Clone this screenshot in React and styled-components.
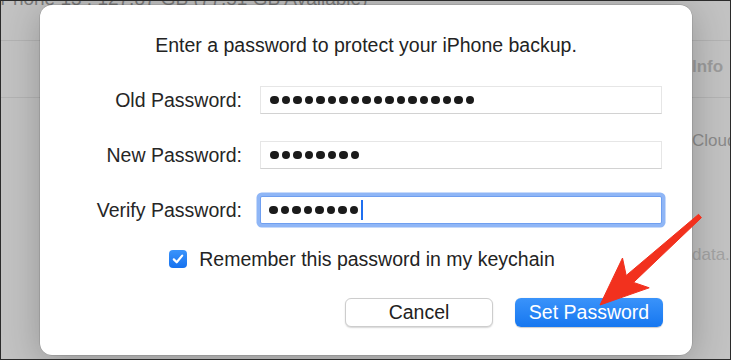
import React from 'react';
import styled, { createGlobalStyle } from 'styled-components';

const GlobalStyle = createGlobalStyle`
  html, body {
    margin: 0;
    padding: 0;
    background: #c3c3c3;
  }
`;

const Screen = styled.div`
  position: relative;
  width: 731px;
  height: 360px;
  box-sizing: border-box;
  border: 1px solid #2b2b2b;
  background: #c2c2c2;
  overflow: hidden;
  font-family: "Liberation Sans", Arial, sans-serif;
`;

const BackWindow = styled.div`
  display: flex;
  flex-direction: column;
`;

const DeviceBar = styled.div`
  height: 39px;
  border-bottom: 1px solid #b3b3b3;
  overflow: hidden;
`;

const DeviceText = styled.div`
  margin: -13px 0 0 -5px;
  font-size: 19px;
  line-height: 22px;
  color: #7a7a7a;
  white-space: nowrap;
`;

const TabBar = styled.div`
  height: 57px;
  border-bottom: 1px solid #b3b3b3;
  display: flex;
  justify-content: flex-end;
  padding-top: 15px;
  box-sizing: border-box;
`;

const SideColumn = styled.div`
  align-self: flex-end;
  width: 38px;
  display: flex;
  flex-direction: column;
`;

const SideText = styled.div`
  width: 38px;
  font-size: 17px;
  line-height: 22px;
  white-space: nowrap;
  overflow: hidden;
  color: ${(p) => p.$color || '#8a8a8a'};
  font-weight: ${(p) => (p.$bold ? 700 : 400)};
  margin-top: ${(p) => p.$top || 0}px;
`;

const Sheet = styled.div`
  position: absolute;
  left: 39px;
  top: 4px;
  width: 652px;
  height: 350px;
  box-sizing: border-box;
  background: #ffffff;
  border-radius: 12px;
  box-shadow: 0 0 0 0.5px rgba(0, 0, 0, 0.18), 0 6px 36px rgba(0, 0, 0, 0.24);
  padding-top: 28px;
  display: flex;
  flex-direction: column;
  color: #232323;
  font-size: 19.5px;
`;

const Title = styled.div`
  text-align: center;
  line-height: 24px;
`;

const Form = styled.div`
  margin-top: 29px;
  display: grid;
  grid-template-columns: 202px 402px;
  column-gap: 18px;
  row-gap: 27px;
  grid-auto-rows: 28px;
`;

const Label = styled.div`
  text-align: right;
  line-height: 28px;
  color: #262626;
`;

const Field = styled.div`
  box-sizing: border-box;
  height: 28px;
  display: flex;
  align-items: center;
  background: #fff;
  border: 1px solid ${(p) => (p.$focused ? '#6f9ff0' : '#e6e6e6')};
  border-bottom-color: ${(p) => (p.$focused ? '#6f9ff0' : '#d2d2d2')};
  border-radius: ${(p) => (p.$focused ? '2px' : '0')};
  box-shadow: ${(p) => (p.$focused ? '0 0 0 3.5px #8fb6f6' : 'none')};
  padding-left: ${(p) => (p.$focused ? '8px' : '9px')};
`;

const Dot = styled.span`
  width: 8.5px;
  height: 8.5px;
  border-radius: 50%;
  background: #1b1b1b;
  margin-right: 3px;
  flex: none;
`;

const Caret = styled.span`
  width: 2px;
  height: 20px;
  background: #1f6ff0;
`;

const CheckRow = styled.div`
  margin-top: 23px;
  padding-right: 8px;
  display: flex;
  justify-content: center;
  align-items: center;
  gap: 12px;
  line-height: 24px;
`;

const CheckBox = styled.span`
  width: 18px;
  height: 18px;
  border-radius: 4px;
  background: linear-gradient(#3b94fb, #1571ef);
  display: flex;
  align-items: center;
  justify-content: center;
`;

const Buttons = styled.div`
  margin-top: 27px;
  padding-right: 29px;
  display: flex;
  justify-content: flex-end;
  gap: 22px;
`;

const Button = styled.button`
  width: 148px;
  height: 29px;
  border-radius: 6px;
  font-family: "Liberation Sans", Arial, sans-serif;
  font-size: 19.5px;
  padding: 0;
  cursor: pointer;
  border: ${(p) => (p.$primary ? 'none' : '0.5px solid #cdcdcd')};
  background: ${(p) => (p.$primary ? 'linear-gradient(#3a93fa, #1677f0)' : '#ffffff')};
  color: ${(p) => (p.$primary ? '#ffffff' : '#222222')};
  box-shadow: ${(p) =>
    p.$primary ? '0 0.5px 1px rgba(0,0,0,0.2)' : '0 1px 1.5px rgba(0,0,0,0.16)'};
`;

const Arrow = styled.svg`
  position: absolute;
  left: 589px;
  top: 204px;
  width: 120px;
  height: 110px;
  pointer-events: none;
`;

const fields = [
  { label: 'Old Password:', count: 18 },
  { label: 'New Password:', count: 8 },
  { label: 'Verify Password:', count: 8, focused: true },
];

function Dots({ count }) {
  return Array.from({ length: count }, (_, i) => <Dot key={i} />);
}

export default function App() {
  return (
    <>
      <GlobalStyle />
      <Screen>
        <BackWindow>
          <DeviceBar>
            <DeviceText>iPhone 13 : 127.87 GB (77.51 GB Available)</DeviceText>
          </DeviceBar>
          <TabBar>
            <SideText $bold $color="#9b9b9b">Info</SideText>
          </TabBar>
          <SideColumn>
            <SideText $top={32} $color="#8a8a8a">Cloud</SideText>
            <SideText $top={92} $color="#a2a2a2">data.</SideText>
          </SideColumn>
        </BackWindow>

        <Sheet>
          <Title>Enter a password to protect your iPhone backup.</Title>
          <Form>
            {fields.map((f) => (
              <React.Fragment key={f.label}>
                <Label>{f.label}</Label>
                <Field $focused={f.focused}>
                  <Dots count={f.count} />
                  {f.focused && <Caret />}
                </Field>
              </React.Fragment>
            ))}
          </Form>
          <CheckRow>
            <CheckBox>
              <svg width="14" height="14" viewBox="0 0 14 14">
                <path d="M2.8 7.4 L5.7 10.3 L11.2 3.6" fill="none" stroke="#fff" strokeWidth="2.2" strokeLinecap="round" strokeLinejoin="round" />
              </svg>
            </CheckBox>
            <span>Remember this password in my keychain</span>
          </CheckRow>
          <Buttons>
            <Button>Cancel</Button>
            <Button $primary>Set Password</Button>
          </Buttons>
        </Sheet>

        <Arrow viewBox="590 205 120 110">
          <polygon
            points="600,305 622.5,258 626.2,275.5 698.6,214.3 701.4,217.7 633.5,282.4 649.2,287.8"
            fill="#f2311e"
            strokeLinejoin="round"
            stroke="#f2311e"
            strokeWidth="1"
          />
        </Arrow>
      </Screen>
    </>
  );
}
